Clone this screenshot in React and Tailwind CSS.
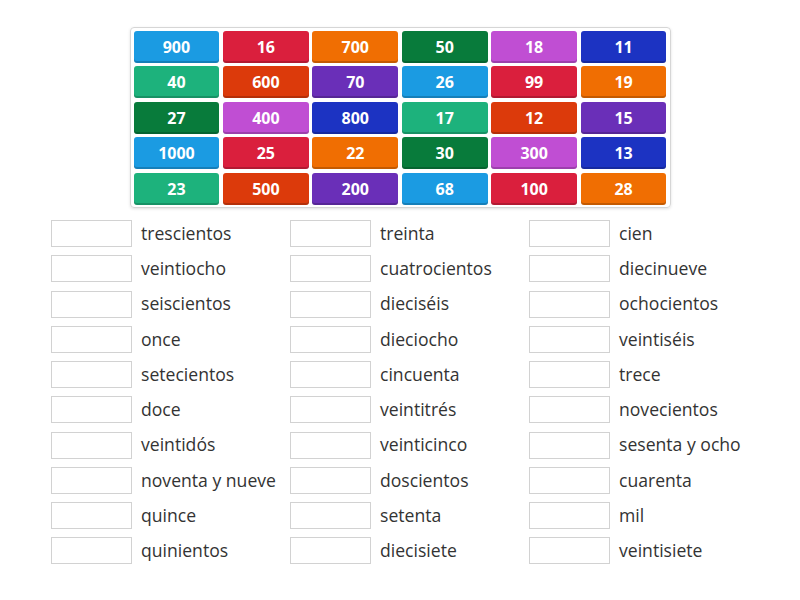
import React from "react";

const C = {
  blue: "bg-[#1b9be2]",
  red: "bg-[#da1f3d]",
  orange: "bg-[#f06e02]",
  dgreen: "bg-[#087b3b]",
  magenta: "bg-[#c04ed3]",
  navy: "bg-[#1c33c2]",
  teal: "bg-[#1db27c]",
  rorange: "bg-[#dc3a0b]",
  purple: "bg-[#6a2fb8]",
};

const tiles = [
  ["900", "blue"], ["16", "red"], ["700", "orange"], ["50", "dgreen"], ["18", "magenta"], ["11", "navy"],
  ["40", "teal"], ["600", "rorange"], ["70", "purple"], ["26", "blue"], ["99", "red"], ["19", "orange"],
  ["27", "dgreen"], ["400", "magenta"], ["800", "navy"], ["17", "teal"], ["12", "rorange"], ["15", "purple"],
  ["1000", "blue"], ["25", "red"], ["22", "orange"], ["30", "dgreen"], ["300", "magenta"], ["13", "navy"],
  ["23", "teal"], ["500", "rorange"], ["200", "purple"], ["68", "blue"], ["100", "red"], ["28", "orange"],
];

const cols = [
  ["trescientos", "veintiocho", "seiscientos", "once", "setecientos", "doce", "veintidós", "noventa y nueve", "quince", "quinientos"],
  ["treinta", "cuatrocientos", "dieciséis", "dieciocho", "cincuenta", "veintitrés", "veinticinco", "doscientos", "setenta", "diecisiete"],
  ["cien", "diecinueve", "ochocientos", "veintiséis", "trece", "novecientos", "sesenta y ocho", "cuarenta", "mil", "veintisiete"],
];

export default function App() {
  return (
    <div className="w-[800px] h-[600px] bg-white font-['Open_Sans',sans-serif] overflow-hidden">
      <div className="pt-[27px] flex justify-center">
        <div className="w-[541px] h-[181px] border border-[#d6d6d6] rounded-[4px] shadow-[0_1px_3px_rgba(0,0,0,0.12)] pl-[3px] pr-[3px] pt-[3px] grid grid-cols-6 gap-x-[3.5px] gap-y-[3.4px] content-start">
          {tiles.map(([t, c], i) => (
            <div
              key={i}
              className={`${C[c]} h-[32px] rounded-[3px] flex items-center justify-center text-white font-bold text-[16px] shadow-[inset_0_-2px_0_rgba(0,0,0,0.18)]`}
            >
              {t}
            </div>
          ))}
        </div>
      </div>
      <div className="pt-[12px] pl-[51px] flex">
        {cols.map((col, ci) => (
          <div key={ci} className="w-[239px] flex flex-col">
            {col.map((w, i) => (
              <div key={i} className="h-[35.25px] flex items-start">
                <div className="w-[81px] h-[27px] border border-[#d2d2d2] bg-white shrink-0"></div>
                <div className="ml-[9px] h-[26px] flex items-center text-[17.6px] text-[#333333] whitespace-nowrap">{w}</div>
              </div>
            ))}
          </div>
        ))}
      </div>
    </div>
  );
}
